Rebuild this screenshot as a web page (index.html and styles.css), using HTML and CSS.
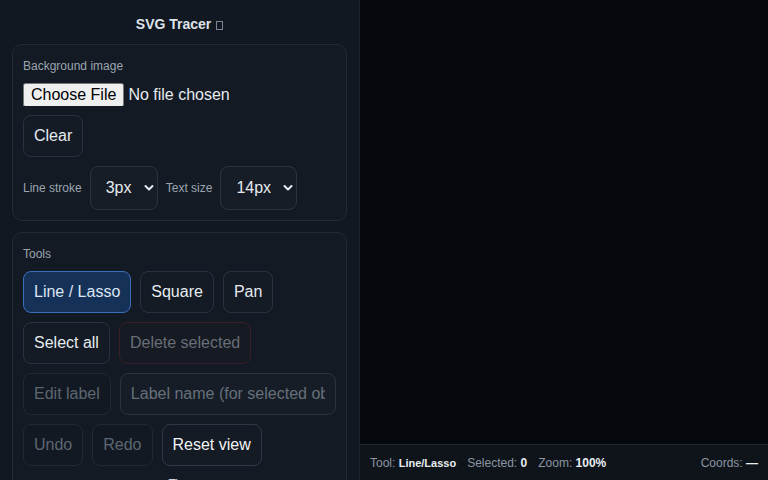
FILE: index.html
```html
<!DOCTYPE html>
<html lang="en">
<head>
<meta charset="utf-8">
<title>SVG Tracer</title>
<link rel="stylesheet" href="styles.css">
</head>
<body>
<div class="app">
  <aside class="sidebar">
    <h1 class="title">SVG Tracer <span class="tofu" aria-hidden="true"></span></h1>
    <section class="card first">
      <div class="label">Background image</div>
      <input type="file" class="file">
      <div class="row"><button class="btn">Clear</button></div>
      <div class="row settings">
        <span class="small">Line stroke</span>
        <span class="select-wrap">
          <select class="select"><option>3px</option></select>
          <svg class="chev" width="10" height="7" viewBox="0 0 10 7"><path d="M1.5 1.5L5 5L8.5 1.5" fill="none" stroke="#e6ebf0" stroke-width="2" stroke-linecap="round" stroke-linejoin="round"/></svg>
        </span>
        <span class="small">Text size</span>
        <span class="select-wrap">
          <select class="select"><option>14px</option></select>
          <svg class="chev" width="10" height="7" viewBox="0 0 10 7"><path d="M1.5 1.5L5 5L8.5 1.5" fill="none" stroke="#e6ebf0" stroke-width="2" stroke-linecap="round" stroke-linejoin="round"/></svg>
        </span>
      </div>
    </section>
    <section class="card">
      <div class="label">Tools</div>
      <div class="row">
        <button class="btn active">Line / Lasso</button>
        <button class="btn">Square</button>
        <button class="btn">Pan</button>
      </div>
      <div class="row">
        <button class="btn">Select all</button>
        <button class="btn danger" disabled>Delete selected</button>
      </div>
      <div class="row">
        <button class="btn" disabled>Edit label</button>
        <input class="text-input" type="text" placeholder="Label name (for selected object)" disabled>
      </div>
      <div class="row">
        <button class="btn" disabled>Undo</button>
        <button class="btn" disabled>Redo</button>
        <button class="btn strong">Reset view</button>
      </div>
      <div class="hint">Tips</div>
    </section>
  </aside>
  <main class="main">
    <div class="canvas"></div>
    <footer class="status">
      <div class="status-left">
        <span>Tool: <b class="tool-name">Line/Lasso</b></span>
        <span>Selected: <b>0</b></span>
        <span>Zoom: <b>100%</b></span>
      </div>
      <span>Coords: <b>—</b></span>
    </footer>
  </main>
</div>
</body>
</html>
```
FILE: styles.css
```css
* { box-sizing: border-box; }
html, body { margin: 0; height: 100%; }
body {
  font-family: "Liberation Sans", Arial, sans-serif;
  background: #05080d;
  color: #e6ebf0;
}
.app {
  display: flex;
  height: 480px;
  overflow: hidden;
}
.sidebar {
  width: 360px;
  flex: none;
  background: #111821;
  border-right: 1px solid #1c2430;
  padding: 13px 12px 0 12px;
  display: flex;
  flex-direction: column;
  overflow: hidden;
}
.title {
  margin: 0;
  font-size: 14px;
  line-height: 22px;
  font-weight: bold;
  text-align: center;
  color: #dde3ea;
}
.tofu {
  display: inline-block;
  width: 7px;
  height: 9px;
  border: 1px solid #7c8590;
  vertical-align: -1px;
  margin-left: 1px;
}
.card {
  flex: none;
  margin-top: 11px;
  background: #131a23;
  border: 1px solid #212a35;
  border-radius: 10px;
  padding: 10px;
  display: flex;
  flex-direction: column;
  gap: 9px;
}
.card.first { margin-top: 9px; }
.label {
  font-size: 12px;
  line-height: 16px;
  padding-top: 3px;
  color: #9ba5b1;
}
.file {
  font-family: inherit;
  font-size: 16px;
  color: #e6ebf0;
  height: 23px;
}
.row {
  display: flex;
  flex-wrap: wrap;
  gap: 9px;
  align-items: center;
}
.settings { gap: 8px; }
.small {
  font-size: 12px;
  color: #9ba5b1;
}
.btn {
  font-family: inherit;
  font-size: 16px;
  line-height: 20px;
  padding: 10px;
  border: 1px solid #29323e;
  border-radius: 8px;
  background: #141b24;
  color: #e6ebf0;
}
.btn:disabled {
  color: #5d6671;
  border-color: #212933;
  background: #121922;
}
.btn.active {
  background: #163158;
  border-color: #3a6fb9;
  color: #dbe5f3;
}
.btn.danger:disabled {
  border-color: #3a1f28;
  background: #161a22;
  color: #686d77;
}
.btn.strong {
  border-color: #2f3844;
  color: #f0f3f6;
}
.text-input {
  flex: 1;
  min-width: 0;
  font-family: inherit;
  font-size: 16px;
  line-height: 20px;
  padding: 10px;
  border: 1px solid #2a333e;
  border-radius: 8px;
  background: #161d26;
  color: #e6ebf0;
}
.text-input::placeholder { color: #66707b; }
.select-wrap {
  position: relative;
  display: inline-block;
}
.select {
  appearance: none;
  -webkit-appearance: none;
  font-family: inherit;
  font-size: 16px;
  line-height: 18px;
  padding: 12px 25px 12px 15px;
  border: 1px solid #2a333e;
  border-radius: 8px;
  background: #161d26;
  color: #e6ebf0;
}
.chev {
  position: absolute;
  right: 4px;
  top: 50%;
  transform: translateY(-50%);
  pointer-events: none;
}
.hint {
  text-align: center;
  font-size: 12px;
  line-height: 18px;
  color: #c9d0d8;
}
.main {
  flex: 1;
  display: flex;
  flex-direction: column;
  min-width: 0;
}
.canvas {
  flex: 1;
  background: #05080d;
}
.status {
  height: 36px;
  flex: none;
  background: #0f141b;
  border-top: 1px solid #1e2630;
  padding: 0 10px;
  display: flex;
  align-items: center;
  justify-content: space-between;
  font-size: 12px;
  color: #8b95a1;
}
.status-left {
  display: flex;
  gap: 11px;
}
.status b {
  color: #e8edf2;
}
.status .tool-name {
  font-size: 11px;
}
```
